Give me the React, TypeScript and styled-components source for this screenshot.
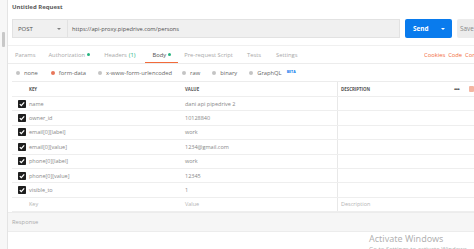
import styled, { createGlobalStyle } from "styled-components";

const Global = createGlobalStyle`
  html, body { margin: 0; padding: 0; background: #fff; overflow: hidden; }
  body { font-family: "Open Sans", "DejaVu Sans", sans-serif; color: #505050; }
`;

const Page = styled.div`
  display: flex;
  width: 474px;
  height: 249px;
  position: relative;
`;

const Rail = styled.div`
  width: 7px;
  flex: none;
  background: #f7f7f7;
  border-right: 1px solid #e4e4e4;
  display: flex;
  justify-content: center;
`;

const RailThumb = styled.div`
  width: 3px;
  height: 15px;
  margin-top: 32px;
  background: #c8c8c8;
  border-radius: 1px;
`;

const Main = styled.div`
  flex: 1;
  display: flex;
  flex-direction: column;
  min-width: 0;
`;

const TitleRow = styled.div`
  height: 13px;
  padding: 0 0 0 4px;
  display: flex;
  align-items: center;
  font-size: 6px;
  font-weight: 700;
  color: #595959;
`;

const UrlRow = styled.div`
  display: flex;
  margin: 6px 0 0 4px;
  height: 19px;
`;

const Method = styled.div`
  width: 55px;
  display: flex;
  align-items: center;
  justify-content: space-between;
  padding: 0 6px 0 5px;
  box-sizing: border-box;
  background: #f0f0f0;
  border: 1px solid #e2e2e2;
  border-right: none;
  font-size: 6px;
  color: #505050;
`;

const Caret = styled.span<{ light?: boolean }>`
  width: 0;
  height: 0;
  border-left: 2px solid transparent;
  border-right: 2px solid transparent;
  border-top: 2.5px solid ${(p) => (p.light ? "#fff" : "#808080")};
`;

const UrlInput = styled.div`
  flex: 1;
  display: flex;
  align-items: center;
  padding-left: 4px;
  background: #f0f0f0;
  border: 1px solid #e2e2e2;
  font-size: 5.7px;
  color: #505050;
`;

const SendButton = styled.div`
  width: 47px;
  margin-left: 5px;
  display: flex;
  align-items: center;
  justify-content: space-between;
  padding: 0 7px 0 8px;
  box-sizing: border-box;
  background: #097bed;
  border-radius: 2px;
  color: #fff;
  font-size: 6.4px;
  font-weight: 700;
`;

const SaveButton = styled.div`
  flex: none;
  width: 17px;
  margin-left: 5px;
  display: flex;
  align-items: center;
  padding-left: 3px;
  box-sizing: border-box;
  background: #ececec;
  border-radius: 2px 0 0 2px;
  color: #888;
  font-size: 6.4px;
  white-space: nowrap;
  overflow: hidden;
`;

const TabRow = styled.div`
  display: flex;
  align-items: stretch;
  height: 17px;
  margin-top: 7px;
  border-top: 1px solid #f0f0f0;
  border-bottom: 1px solid #ececec;
  padding-left: 7px;
  font-size: 5.8px;
  white-space: nowrap;
`;

const Tab = styled.div<{ active?: boolean; gap: number }>`
  display: flex;
  align-items: center;
  gap: 2px;
  margin-right: ${(p) => p.gap}px;
  padding: 0 ${(p) => (p.active ? "7px 0 8px" : "0")};
  color: ${(p) => (p.active ? "#505050" : "#a8a8a8")};
  border-bottom: 1.5px solid ${(p) => (p.active ? "#f26b3a" : "transparent")};
  border-top: 1.5px solid transparent;
`;

const Dot = styled.span`
  width: 3px;
  height: 3px;
  border-radius: 50%;
  background: #26b47f;
`;

const Count = styled.span`
  color: #26b47f;
`;

const TabLinks = styled.div`
  margin-left: auto;
  display: flex;
  align-items: center;
  gap: 3px;
  color: #f26b3a;
  overflow: hidden;
  width: 50px;
`;

const RadioRow = styled.div`
  display: flex;
  align-items: center;
  height: 17px;
  padding-left: 8px;
  font-size: 5.8px;
  color: #666;
  white-space: nowrap;
`;

const RadioItem = styled.label<{ gap: number }>`
  display: flex;
  align-items: center;
  gap: 4px;
  margin-right: ${(p) => p.gap}px;
`;

const RadioDot = styled.span<{ on?: boolean }>`
  width: 4px;
  height: 4px;
  border-radius: 50%;
  background: ${(p) => (p.on ? "#e8765a" : "#c4c4c4")};
`;

const Beta = styled.sup`
  font-size: 3.6px;
  color: #097bed;
  font-weight: 700;
  margin-left: 1px;
  position: relative;
  top: -1px;
`;

const Table = styled.div`
  display: flex;
  flex-direction: column;
  margin-left: 4px;
  border-top: 1px solid #ececec;
`;

const Row = styled.div<{ head?: boolean }>`
  display: grid;
  grid-template-columns: 14px 156px 156px 110px 1fr;
  height: ${(p) => (p.head ? "14px" : "13.4px")};
  border-bottom: 1px solid #eeeeee;
  font-size: ${(p) => (p.head ? "4.4px" : "5.5px")};
  font-weight: ${(p) => (p.head ? 700 : 400)};
  color: ${(p) => (p.head ? "#555" : "#888")};
`;

const Cell = styled.div<{ line?: boolean; faint?: boolean }>`
  display: flex;
  align-items: center;
  padding-left: 3px;
  white-space: nowrap;
  overflow: hidden;
  color: ${(p) => (p.faint ? "#b4b4b4" : "inherit")};
  border-right: ${(p) => (p.line ? "1px solid #e8e8e8" : "none")};
`;

const CheckCell = styled.div`
  display: flex;
  align-items: center;
  justify-content: flex-end;
`;

const ActionCell = styled.div`
  display: flex;
  align-items: center;
  justify-content: space-between;
  padding-left: 6px;
  color: #555;
  font-size: 6px;
  letter-spacing: -0.5px;
`;

const BulkIcon = styled.span`
  width: 5px;
  height: 6px;
  background: #f4b6a2;
  border-radius: 1px;
`;

const ResponseBar = styled.div`
  height: 18px;
  display: flex;
  align-items: center;
  padding-left: 4px;
  background: #f6f6f6;
  border-top: 1px solid #ececec;
  border-bottom: 1px solid #ececec;
  font-size: 5.8px;
  color: #aaa;
`;

const Watermark = styled.div`
  position: absolute;
  left: 369px;
  top: 233px;
  display: flex;
  flex-direction: column;
  font-family: "Noto Sans", "Open Sans", sans-serif;
  color: rgba(150, 150, 150, 0.75);
  white-space: nowrap;
`;

const WatermarkTitle = styled.span`
  font-size: 9px;
  line-height: 12px;
`;

const WatermarkNote = styled.span`
  font-size: 6px;
  line-height: 8px;
`;

const Check = () => (
  <svg width="8" height="8" viewBox="0 0 8 8">
    <rect width="8" height="8" rx="0.8" fill="#1e1e1e" />
    <path d="M1.8 4.1 L3.3 5.6 L6.2 2.4" stroke="#fff" strokeWidth="1.3" fill="none" />
  </svg>
);

const params = [
  ["name", "dani api pipedrive 2"],
  ["owner_id", "10128840"],
  ["email[0][label]", "work"],
  ["email[0][value]", "1234@gmail.com"],
  ["phone[0][label]", "work"],
  ["phone[0][value]", "12345"],
  ["visible_to", "1"],
];

const App = () => {
  return (
    <Page>
      <Global />
      <Rail>
        <RailThumb />
      </Rail>
      <Main>
        <TitleRow>Untitled Request</TitleRow>
        <UrlRow>
          <Method>
            POST
            <Caret />
          </Method>
          <UrlInput>https://api-proxy.pipedrive.com/persons</UrlInput>
          <SendButton>
            Send
            <Caret light />
          </SendButton>
          <SaveButton>Save</SaveButton>
        </UrlRow>
        <TabRow>
          <Tab gap={13}>Params</Tab>
          <Tab gap={14}>
            Authorization <Dot />
          </Tab>
          <Tab gap={9}>
            Headers <Count>(1)</Count>
          </Tab>
          <Tab active gap={6}>
            Body <Dot />
          </Tab>
          <Tab gap={14}>Pre-request Script</Tab>
          <Tab gap={15}>Tests</Tab>
          <Tab gap={0}>Settings</Tab>
          <TabLinks>
            <span>Cookies</span>
            <span>Code</span>
            <span>Comments</span>
          </TabLinks>
        </TabRow>
        <RadioRow>
          <RadioItem gap={13}>
            <RadioDot />
            none
          </RadioItem>
          <RadioItem gap={12}>
            <RadioDot on />
            form-data
          </RadioItem>
          <RadioItem gap={10}>
            <RadioDot />
            x-www-form-urlencoded
          </RadioItem>
          <RadioItem gap={12}>
            <RadioDot />
            raw
          </RadioItem>
          <RadioItem gap={12}>
            <RadioDot />
            binary
          </RadioItem>
          <RadioItem gap={0}>
            <RadioDot />
            GraphQL<Beta>BETA</Beta>
          </RadioItem>
        </RadioRow>
        <Table>
          <Row head>
            <CheckCell />
            <Cell>KEY</Cell>
            <Cell line>VALUE</Cell>
            <Cell>DESCRIPTION</Cell>
            <ActionCell>
              •••
              <BulkIcon />
            </ActionCell>
          </Row>
          {params.map(([k, v]) => (
            <Row key={k}>
              <CheckCell>
                <Check />
              </CheckCell>
              <Cell>{k}</Cell>
              <Cell line>{v}</Cell>
              <Cell />
              <ActionCell />
            </Row>
          ))}
          <Row>
            <CheckCell />
            <Cell faint>Key</Cell>
            <Cell line faint>Value</Cell>
            <Cell faint>Description</Cell>
            <ActionCell />
          </Row>
        </Table>
        <ResponseBar>Response</ResponseBar>
      </Main>
      <Watermark>
        <WatermarkTitle>Activate Windows</WatermarkTitle>
        <WatermarkNote>Go to Settings to activate Windows.</WatermarkNote>
      </Watermark>
    </Page>
  );
};

export default App;
